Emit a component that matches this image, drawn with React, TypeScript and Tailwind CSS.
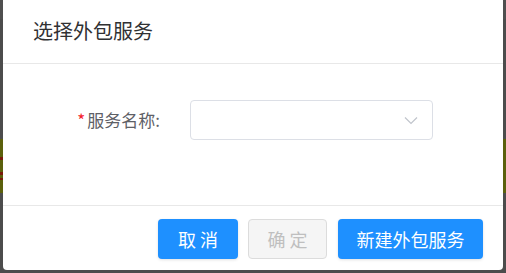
import React from 'react';

const cjk = { fontFamily: '"Noto Sans CJK SC", "Noto Sans", sans-serif' };

function Backdrop() {
  return (
    <div className="flex h-full w-full flex-col bg-[#4c4c4c]">
      <div className="h-[19px] bg-[#4f4f4f]" />
      <div className="h-[120px]" />
      {/* olive band behind the dialog */}
      <div className="relative h-[54px] bg-[#5b600c]">
        <div className="absolute left-0 top-[18px] h-[3px] w-[4px] bg-[#7a1a0a]" />
        <div className="absolute left-0 top-[33px] h-[3px] w-[4px] bg-[#7a1a0a]" />
        <div className="absolute left-0 top-[39px] h-[2px] w-[4px] bg-[#7a1a0a]" />
      </div>
      <div className="flex-1" />
    </div>
  );
}

function SelectBox() {
  return (
    <div className="flex h-[40px] w-[243px] items-center justify-end rounded-[4px] border border-[#dcdfe6] bg-white pr-[14px]">
      <svg width="14" height="9" viewBox="0 0 14 9" fill="none">
        <path d="M1 1.5 L7 7.5 L13 1.5" stroke="#c0c4cc" strokeWidth="1.2" />
      </svg>
    </div>
  );
}

export default function App() {
  return (
    <div className="relative h-[273px] w-[506px] overflow-hidden" style={cjk}>
      <Backdrop />

      {/* Dialog */}
      <div className="absolute left-[3px] top-0 flex h-[270px] w-[500px] flex-col rounded-b-[4px] bg-white">
        <div className="flex h-[64px] items-center border-b border-[#e8e8e8] pb-[2px] pl-[30px]">
          <span className="text-[20px] text-[#303133]">选择外包服务</span>
        </div>

        <div className="flex h-[141px] items-start pt-[36px]">
          <div className="flex h-[40px] w-[157px] items-center justify-end text-[17px] text-[#5e6066]">
            <span className="mr-[2px] text-[#f5222d]">*</span>
            <span>服务名称:</span>
          </div>
          <div className="ml-[30px]">
            <SelectBox />
          </div>
        </div>

        <div className="flex flex-1 items-start justify-end gap-[10px] border-t border-[#e8e8e8] pr-[20px] pt-[13px]">
          <button className="h-[40px] w-[80px] rounded-[4px] bg-[#1e90ff] text-[18px] text-white shadow-[0_1px_3px_rgba(0,0,0,0.12)]">
            取 消
          </button>
          <button className="h-[40px] w-[79px] rounded-[4px] border border-[#dcdcdc] bg-[#f5f5f5] text-[18px] text-[#bfbfbf]">
            确 定
          </button>
          <button className="ml-[1px] h-[40px] w-[145px] rounded-[4px] bg-[#1e90ff] text-[18px] text-white shadow-[0_1px_3px_rgba(0,0,0,0.12)]">
            新建外包服务
          </button>
        </div>
      </div>
    </div>
  );
}
